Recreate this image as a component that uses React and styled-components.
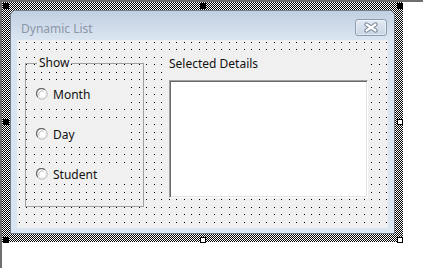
import React from "react";
import styled, { createGlobalStyle } from "styled-components";

const Global = createGlobalStyle`
  html, body {
    margin: 0;
    background: #fff;
  }
  body {
    font-family: "Noto Sans", "Open Sans", sans-serif;
    font-size: 12px;
  }
`;

const Page = styled.div`
  width: 423px;
  height: 268px;
  box-sizing: border-box;
  border-top: 2px solid #6f6f6f;
  border-left: 2px solid #6f6f6f;
  overflow: hidden;
`;

// hatched selection frame that the designer draws round the form
const Selection = styled.div`
  position: relative;
  width: 401px;
  height: 240px;
  box-sizing: border-box;
  padding: 8px;
  background: conic-gradient(#000 25%, #fff 0 50%, #000 0 75%, #fff 0) 0 0 / 2px 2px;
`;

const Handle = styled.span`
  position: absolute;
  width: 6px;
  height: 6px;
  box-sizing: border-box;
  background: ${(p) => (p.open ? "#fff" : "#000")};
  border: 1px solid #000;
  left: ${(p) => p.x}px;
  top: ${(p) => p.y}px;
`;

const Window = styled.div`
  width: 385px;
  height: 224px;
  box-sizing: border-box;
  border: 1px solid #6e7c8e;
  border-radius: 6px 6px 0 0;
  background: #dae5f2;
  display: flex;
  flex-direction: column;
  overflow: hidden;
`;

const TitleBar = styled.div`
  height: 29px;
  flex: none;
  box-sizing: border-box;
  display: flex;
  justify-content: space-between;
  align-items: flex-start;
  padding: 8px 7px 0 10px;
  background: linear-gradient(#c0cfe1, #dce6f2);
`;

const Title = styled.span`
  margin-top: 2px;
  color: #8b96a7;
  font-size: 12px;
  line-height: 15px;
`;

const CloseButton = styled.div`
  width: 32px;
  height: 17px;
  box-sizing: border-box;
  border: 1px solid #8e9cb0;
  border-radius: 3px;
  background: linear-gradient(#e3eaf3, #c9d5e4);
  box-shadow: inset 0 0 0 1px rgba(255, 255, 255, 0.45);
  display: flex;
  align-items: center;
  justify-content: center;
`;

const Frame = styled.div`
  flex: 1;
  padding: 0 6px 5px 6px;
  display: flex;
`;

const Client = styled.div`
  position: relative;
  flex: 1;
  background: #f0f0f0;
  display: flex;
  align-items: flex-start;
  gap: 19px;
  padding-left: 8px;

  &::before {
    content: "";
    position: absolute;
    inset: 0;
    background: linear-gradient(90deg, #000 0 1px, transparent 1px 7px, #000 7px 8px, transparent 8px) 2px 0 / 15px 15px;
    -webkit-mask: linear-gradient(180deg, #000 0 1px, transparent 1px 7px, #000 7px 8px, transparent 8px) 0 2px / 15px 15px;
    mask: linear-gradient(180deg, #000 0 1px, transparent 1px 7px, #000 7px 8px, transparent 8px) 0 2px / 15px 15px;
  }

  & > * {
    position: relative;
  }
`;

const GroupBox = styled.fieldset`
  margin: 16px 0 0 0;
  padding: 14px 0 0 8px;
  width: 119px;
  height: 151px;
  box-sizing: border-box;
  min-width: 0;
  border: 1px solid #a0a0a0;
  display: flex;
  flex-direction: column;
  gap: 20px;
`;

const Legend = styled.legend`
  margin-left: 3px;
  padding: 0 2px;
  background: #f0f0f0;
  color: #111;
  font-size: 12px;
  line-height: 14px;
`;

const Option = styled.label`
  width: 97px;
  height: 20px;
  display: flex;
  align-items: center;
  gap: 5px;
  padding-left: 2px;
  box-sizing: border-box;
  background: #f0f0f0;
  color: #111;
  font-size: 12px;
`;

const Column = styled.div`
  margin-top: 13px;
  display: flex;
  flex-direction: column;
`;

const Caption = styled.div`
  width: 205px;
  height: 27px;
  box-sizing: border-box;
  padding: 3px 0 0 6px;
  background: #f0f0f0;
  color: #111;
  font-size: 12px;
  line-height: 16px;
`;

const TextBox = styled.div`
  margin-left: 6px;
  width: 199px;
  height: 118px;
  box-sizing: border-box;
  background: #fff;
  border: 1px solid;
  border-color: #a0a0a0 #fff #fff #a0a0a0;
  box-shadow: inset 1px 1px #696969, inset -1px -1px #e3e3e3;
`;

function Radio() {
  return (
    <svg width="12" height="12" viewBox="0 0 12 12">
      <circle cx="6" cy="6" r="5.2" fill="#fff" stroke="#b4b4b4" />
      <path d="M1.9 9 A5 5 0 0 1 9 1.9" stroke="#6a6a6a" strokeWidth="1.2" fill="none" />
      <path d="M3.1 7.7 A3.5 3.5 0 0 1 7.7 3.1" stroke="#bcbcbc" fill="none" />
      <path d="M9.6 4 A4.3 4.3 0 0 1 4 9.6" stroke="#e8e8e8" fill="none" />
    </svg>
  );
}

function CloseX() {
  return (
    <svg width="16" height="11" viewBox="0 0 16 11">
      <path d="M3.5 2.5 L12.5 8.5 M12.5 2.5 L3.5 8.5" stroke="#76839a" strokeWidth="4.2" strokeLinecap="round" />
      <path d="M3.5 2.5 L12.5 8.5 M12.5 2.5 L3.5 8.5" stroke="#fff" strokeWidth="2.2" strokeLinecap="round" />
    </svg>
  );
}

const handles = [
  { x: 1, y: 1 },
  { x: 198, y: 1 },
  { x: 395, y: 1 },
  { x: 1, y: 117 },
  { x: 395, y: 117, open: true },
  { x: 1, y: 235 },
  { x: 198, y: 235, open: true },
  { x: 395, y: 235, open: true },
];

export default function App() {
  return (
    <>
      <Global />
      <Page>
        <Selection>
          <Window>
            <TitleBar>
              <Title>Dynamic List</Title>
              <CloseButton>
                <CloseX />
              </CloseButton>
            </TitleBar>
            <Frame>
              <Client>
                <GroupBox>
                  <Legend>Show</Legend>
                  {["Month", "Day", "Student"].map((t) => (
                    <Option key={t}>
                      <Radio />
                      {t}
                    </Option>
                  ))}
                </GroupBox>
                <Column>
                  <Caption>Selected Details</Caption>
                  <TextBox />
                </Column>
              </Client>
            </Frame>
          </Window>
          {handles.map((h, i) => (
            <Handle key={i} x={h.x} y={h.y} open={h.open} />
          ))}
        </Selection>
      </Page>
    </>
  );
}
